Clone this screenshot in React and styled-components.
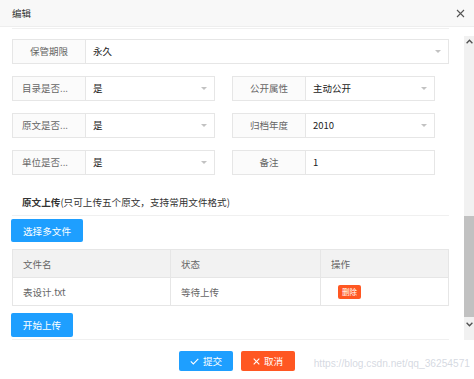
import React from "react";
import styled, { createGlobalStyle } from "styled-components";

const Global = createGlobalStyle`
  html, body { margin: 0; padding: 0; background: #fff; }
  body { font-family: "Noto Sans CJK SC", "Liberation Sans", sans-serif; }
  * { box-sizing: border-box; }
`;

const Dialog = styled.div`
  position: relative;
  width: 474px;
  height: 379px;
  display: flex;
  flex-direction: column;
  background: #fff;
  overflow: hidden;
`;

const Header = styled.div`
  height: 27px;
  flex: none;
  display: flex;
  align-items: center;
  justify-content: space-between;
  padding: 0 9px 0 12px;
  background: #f8f8f8;
  border-bottom: 1px solid #eee;
  font-size: 9.5px;
  color: #333;
`;

const Body = styled.div`
  height: 313px;
  flex: none;
  display: flex;
`;

const Content = styled.div`
  flex: 1;
  padding: 1px 15px 0 12px;
  display: flex;
  flex-direction: column;
`;

const Rule = styled.div`
  height: 1px;
  background: #f0f0f0;
  margin: ${(p) => p.$m || "0"};
`;

const Rows = styled.div`
  display: flex;
  flex-direction: column;
  gap: 12px;
  margin-top: 10px;
`;

const Pair = styled.div`
  display: grid;
  grid-template-columns: 203px 203px;
  column-gap: 17px;
`;

const Field = styled.div`
  display: flex;
  height: 25px;
  border: 1px solid #e6e6e6;
  background: #fff;
`;

const Label = styled.div`
  width: 73px;
  flex: none;
  background: #fbfbfb;
  border-right: 1px solid #e6e6e6;
  font-size: 9.5px;
  color: #666;
  display: flex;
  align-items: center;
  justify-content: ${(p) => (p.$left ? "flex-start" : "center")};
  padding: 0 0 0 ${(p) => (p.$left ? "9px" : "0")};
  white-space: nowrap;
  overflow: hidden;
`;

const Value = styled.div`
  position: relative;
  flex: 1;
  display: flex;
  align-items: center;
  padding-left: 7px;
  font-size: 9.5px;
  color: #222;
`;

const Caret = styled.span`
  position: absolute;
  right: 7px;
  top: 50%;
  margin-top: -1px;
  width: 0;
  height: 0;
  border-left: 3.5px solid transparent;
  border-right: 3.5px solid transparent;
  border-top: 3.5px solid #c2c2c2;
`;

const SectionTitle = styled.div`
  margin-top: 21px;
  padding-left: 10px;
  font-size: 9.6px;
  line-height: 12px;
  color: #333;
  white-space: nowrap;
  b { font-weight: 700; }
`;

const Btn = styled.button`
  height: ${(p) => p.$h || 25}px;
  width: ${(p) => p.$w}px;
  border: none;
  border-radius: 2px;
  padding: 0;
  background: ${(p) => (p.$danger ? "#ff5722" : "#1e9fff")};
  color: #fff;
  font-family: inherit;
  font-size: 9.6px;
  display: inline-flex;
  align-items: center;
  justify-content: center;
  gap: 4px;
  margin: ${(p) => p.$m || "0"};
  align-self: flex-start;
`;

const Table = styled.div`
  margin-top: 7px;
  border: 1px solid #e6e6e6;
  display: grid;
  grid-template-columns: 158px 150px 1fr;
`;

const Cell = styled.div`
  height: ${(p) => (p.$head ? 28 : 27)}px;
  display: flex;
  align-items: center;
  padding-left: 10px;
  font-size: 9.5px;
  color: #666;
  background: ${(p) => (p.$head ? "#f2f2f2" : "#fff")};
  border-right: ${(p) => (p.$last ? "none" : "1px solid #e6e6e6")};
  border-bottom: ${(p) => (p.$head ? "1px solid #e6e6e6" : "none")};
`;

const DelBtn = styled.span`
  margin-left: 7px;
  width: 23px;
  height: 14px;
  background: #ff5722;
  border-radius: 2px;
  color: #fff;
  font-size: 7.5px;
  display: flex;
  align-items: center;
  justify-content: center;
`;

const Scrollbar = styled.div`
  width: 10px;
  flex: none;
  margin-top: 9px;
  background: #f1f1f1;
  display: flex;
  flex-direction: column;
  align-items: center;
`;

const ArrowBox = styled.div`
  height: ${(p) => p.$h}px;
  width: 10px;
  flex: none;
  display: flex;
  align-items: ${(p) => (p.$top ? "center" : "flex-start")};
  justify-content: center;
  padding-top: ${(p) => (p.$top ? 0 : 5)}px;
`;

const Track = styled.div`
  flex: 1;
  width: 10px;
  display: flex;
  flex-direction: column;
  justify-content: flex-end;
`;

const Thumb = styled.div`
  height: 101px;
  width: 10px;
  background: #c1c1c1;
`;

const Footer = styled.div`
  flex: 1;
  display: flex;
  justify-content: center;
  align-items: flex-start;
  padding-top: 11px;
  gap: 8px;
`;

const Watermark = styled.div`
  position: absolute;
  right: 4px;
  bottom: 10px;
  font-family: "Liberation Sans", Arial, sans-serif;
  font-size: 10.2px;
  color: rgba(200, 205, 215, 0.75);
  white-space: nowrap;
`;

const Chevron = ({ up }) => (
  <svg width="7" height="5" viewBox="0 0 7 5">
    <path
      d={up ? "M0.6 4.2 L3.5 1.2 L6.4 4.2" : "M0.6 0.8 L3.5 3.8 L6.4 0.8"}
      fill="none"
      stroke="#505050"
      strokeWidth="1.3"
    />
  </svg>
);

const CloseIcon = () => (
  <svg width="9" height="9" viewBox="0 0 9 9">
    <path d="M1 1 L8 8 M8 1 L1 8" stroke="#555" strokeWidth="1.1" fill="none" />
  </svg>
);

const CheckIcon = () => (
  <svg width="9" height="7" viewBox="0 0 9 7">
    <path d="M0.8 3.4 L3.3 5.9 L8.3 0.8" stroke="#fff" strokeWidth="1.1" fill="none" />
  </svg>
);

const XIcon = () => (
  <svg width="7" height="7" viewBox="0 0 7 7">
    <path d="M0.7 0.7 L6.3 6.3 M6.3 0.7 L0.7 6.3" stroke="#fff" strokeWidth="1.1" fill="none" />
  </svg>
);

const SelectField = ({ label, value, left, select = true }) => (
  <Field>
    <Label $left={left}>{label}</Label>
    <Value>
      {value}
      {select && <Caret />}
    </Value>
  </Field>
);

export default function App() {
  return (
    <>
      <Global />
      <Dialog>
        <Header>
          <span>编辑</span>
          <CloseIcon />
        </Header>
        <Body>
          <Content>
            <Rule />
            <Rows>
              <SelectField label="保管期限" value="永久" />
              <Pair>
                <SelectField label="目录是否..." value="是" left />
                <SelectField label="公开属性" value="主动公开" />
              </Pair>
              <Pair>
                <SelectField label="原文是否..." value="是" left />
                <SelectField label="归档年度" value="2010" />
              </Pair>
              <Pair>
                <SelectField label="单位是否..." value="是" left />
                <SelectField label="备注" value="1" select={false} />
              </Pair>
            </Rows>
            <SectionTitle>
              <b>原文上传</b>(只可上传五个原文，支持常用文件格式)
            </SectionTitle>
            <Rule $m="7px 0 0 0" />
            <Btn $w={72} $m="3px 0 0 -1px">选择多文件</Btn>
            <Table>
              <Cell $head>文件名</Cell>
              <Cell $head>状态</Cell>
              <Cell $head $last>操作</Cell>
              <Cell>表设计.txt</Cell>
              <Cell>等待上传</Cell>
              <Cell $last>
                <DelBtn>删除</DelBtn>
              </Cell>
            </Table>
            <Btn $w={62} $m="7px 0 0 -1px">开始上传</Btn>
            <Rule $m="2px 0 0 0" />
          </Content>
          <Scrollbar>
            <ArrowBox $h={10} $top>
              <Chevron up />
            </ArrowBox>
            <Track>
              <Thumb />
            </Track>
            <ArrowBox $h={23}>
              <Chevron />
            </ArrowBox>
          </Scrollbar>
        </Body>
        <Footer>
          <Btn $w={54} $h={20}>
            <CheckIcon />
            提交
          </Btn>
          <Btn $w={54} $h={20} $danger>
            <XIcon />
            取消
          </Btn>
        </Footer>
        <Watermark>https://blog.csdn.net/qq_36254571</Watermark>
      </Dialog>
    </>
  );
}
